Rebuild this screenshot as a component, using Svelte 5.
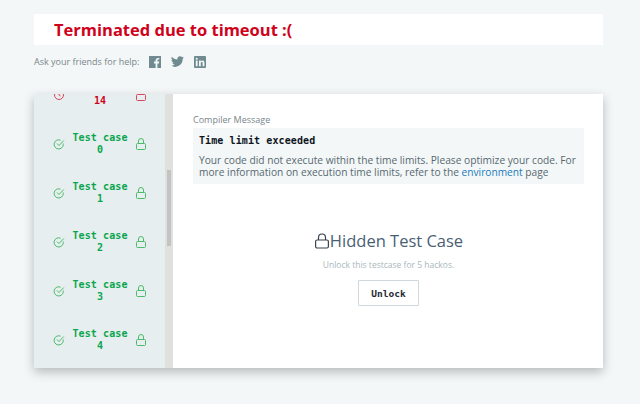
<script>
  const cases = [0, 1, 2, 3, 4];
</script>

<div class="page">
  <header class="banner"><h2>Terminated due to timeout :(</h2></header>

  <div class="share">
    <span>Ask your friends for help:</span>
    <svg viewBox="0 0 12 12" width="12" height="12"><path fill="#6f8b90" fill-rule="evenodd" d="M0 0h12v12H8.400V7.400H10l.2-1.800H8.400V4.500c0-.5.2-.9.9-.9h1V2c-.3 0-.8-.1-1.300-.1-1.400 0-2.400.9-2.400 2.400v1.300H5v1.800h1.600V12H0z"/></svg>
    <svg viewBox="0 0 24 24" width="13" height="13"><path fill="#6f8b90" d="M24 4.600c-.9.4-1.800.7-2.800.8 1-.6 1.800-1.600 2.200-2.700-1 .6-2 1-3.100 1.200A4.900 4.900 0 0 0 11.900 8.400C7.800 8.200 4.200 6.300 1.700 3.200A4.900 4.900 0 0 0 3.200 9.800c-.8 0-1.600-.2-2.200-.6 0 2.400 1.700 4.400 3.900 4.900-.7.2-1.500.2-2.200.1.600 2 2.400 3.400 4.600 3.400A9.900 9.900 0 0 1 0 19.600 14 14 0 0 0 21.500 7.100c1-.7 1.800-1.500 2.500-2.500z"/></svg>
    <svg viewBox="0 0 12 12" width="12" height="12"><path fill="#6f8b90" fill-rule="evenodd" d="M1 0h10a1 1 0 0 1 1 1v10a1 1 0 0 1-1 1H1a1 1 0 0 1-1-1V1a1 1 0 0 1 1-1zM1.800 4.600v5.600h1.800V4.600zM2.700 1.800a1 1 0 1 0 0 2 1 1 0 0 0 0-2zM5 4.600v5.600h1.800V7.300c0-.8.3-1.300 1-1.300.6 0 .8.500.8 1.200v3h1.800V6.900c0-1.600-.8-2.400-2-2.400-.8 0-1.300.4-1.600.9v-.8z"/></svg>
  </div>

  <main class="card">
    <aside class="side">
      <div class="list">
        <div class="row fail">
          <svg class="ic" viewBox="0 0 12 12" width="12" height="12"><circle cx="6" cy="6" r="4.500" fill="none" stroke="currentColor"/><path d="M6 3.500V6l1.500 1" fill="none" stroke="currentColor"/></svg>
          <span class="name">Test case<br />14</span>
          <svg class="ic" viewBox="0 0 12 14" width="12" height="14"><path d="M3.500 6.500V4a2.500 2.500 0 0 1 5 0v2.500" fill="none" stroke="currentColor"/><rect x="1.500" y="6.500" width="9" height="6" rx="1" fill="none" stroke="currentColor"/></svg>
        </div>
        {#each cases as c}
          <div class="row">
            <svg class="ic" viewBox="0 0 12 12" width="12" height="12"><path d="M10.300 5.500v.9a4.600 4.600 0 1 1-2.700-4.200" fill="none" stroke="currentColor"/><path d="M4 5.500l2 2 4.800-5" fill="none" stroke="currentColor"/></svg>
            <span class="name">Test case<br />{c}</span>
            <svg class="ic" viewBox="0 0 12 14" width="12" height="14"><path d="M3.500 6.500V4a2.500 2.500 0 0 1 5 0v2.500" fill="none" stroke="currentColor"/><rect x="1.500" y="6.500" width="9" height="6" rx="1" fill="none" stroke="currentColor"/></svg>
          </div>
        {/each}
      </div>
    </aside>
    <div class="track"><div class="thumb"></div></div>

    <section class="content">
      <div class="label">Compiler Message</div>
      <div class="msg">
        <div class="code">Time limit exceeded</div>
        <p>Your code did not execute within the time limits. Please optimize your code. For more information on execution time limits, refer to the <a href="#env">environment</a> page</p>
      </div>
      <div class="hidden">
        <h3>
          <svg viewBox="0 0 16 18" width="16" height="18"><path d="M4.500 8V5.500a3.500 3.500 0 0 1 7 0V8" fill="none" stroke="#39424e" stroke-width="1.200"/><rect x="1.600" y="8" width="12.800" height="8" rx="1.500" fill="none" stroke="#39424e" stroke-width="1.200"/></svg>
          <span>Hidden Test Case</span>
        </h3>
        <p class="sub">Unlock this testcase for 5 hackos.</p>
        <button>Unlock</button>
      </div>
    </section>
  </main>
</div>

<style>
  :global(body) {
    margin: 0;
    background: #f3f7f7;
    font-family: "Open Sans", sans-serif;
  }
  .page {
    height: 404px;
    padding: 14px 37px 0 34px;
    box-sizing: border-box;
    overflow: hidden;
  }
  .banner {
    background: #fff;
    height: 31px;
    padding-left: 20px;
    display: flex;
    align-items: center;
  }
  h2 {
    margin: 0;
    font-size: 16.500px;
    font-weight: 700;
    color: #d0021b;
    line-height: 31px;
  }
  .share {
    display: flex;
    align-items: center;
    height: 13px;
    margin-top: 10px;
    font-size: 9px;
    color: #7a868b;
  }
  .share span { margin-right: 10px; }
  .share svg { margin-right: 10px; }
  .card {
    margin-top: 26px;
    height: 274px;
    background: #fff;
    display: flex;
    box-shadow: 0 4px 10px rgba(0, 0, 0, 0.25);
  }
  .side {
    width: 131px;
    background: #e7eeef;
    overflow: hidden;
    flex: none;
  }
  .list { margin-top: -24px; }
  .row {
    height: 49px;
    display: flex;
    align-items: center;
    justify-content: space-between;
    padding: 0 18px 0 19px;
    box-sizing: border-box;
    color: #4dbb6b;
  }
  .row.fail { color: #d8475a; }
  .name {
    font-family: "DejaVu Sans Mono", monospace;
    font-weight: 700;
    font-size: 10px;
    line-height: 12px;
    letter-spacing: 0.100px;
    text-align: center;
    color: #0aa64e;
  }
  .fail .name { color: #d0021b; }
  .ic { flex: none; }
  .track {
    width: 8px;
    flex: none;
    background: #e0e0de;
    padding-top: 76px;
    box-sizing: border-box;
    display: flex;
    justify-content: center;
  }
  .thumb {
    width: 4px;
    height: 76px;
    background: #c2c4c4;
  }
  .content {
    flex: 1;
    padding: 19px 19px 0 20px;
  }
  .label {
    font-size: 9px;
    line-height: 13px;
    color: #7a868b;
  }
  .msg {
    margin-top: 2px;
    background: #f3f7f7;
    height: 56px;
    padding: 7px 6px 0 6px;
    box-sizing: border-box;
  }
  .code {
    font-family: "DejaVu Sans Mono", monospace;
    font-weight: 700;
    font-size: 10px;
    line-height: 12px;
    letter-spacing: 0.100px;
    color: #0e141e;
  }
  .msg p {
    margin: 7px 0 0;
    font-size: 10.200px;
    line-height: 12px;
    color: #576871;
  }
  .msg a { color: #1d7bbf; text-decoration: none; }
  .hidden {
    margin-top: 45px;
    display: flex;
    flex-direction: column;
    align-items: center;
  }
  h3 {
    margin: 0;
    font-size: 16.500px;
    font-weight: 400;
    line-height: 24px;
    display: flex;
    align-items: center;
  }
  h3 span { color: #4a5f74; }
  .sub {
    margin: 6px 0 0;
    font-size: 8.500px;
    line-height: 12px;
    color: #a9b8bb;
  }
  button {
    margin-top: 9px;
    width: 61px;
    height: 26px;
    background: #fff;
    border: 1px solid #cfd8dc;
    border-radius: 1px;
    font-family: "DejaVu Sans Mono", monospace;
    font-weight: 700;
    font-size: 9.500px;
    color: #1f2a36;
    padding: 0;
  }
</style>
